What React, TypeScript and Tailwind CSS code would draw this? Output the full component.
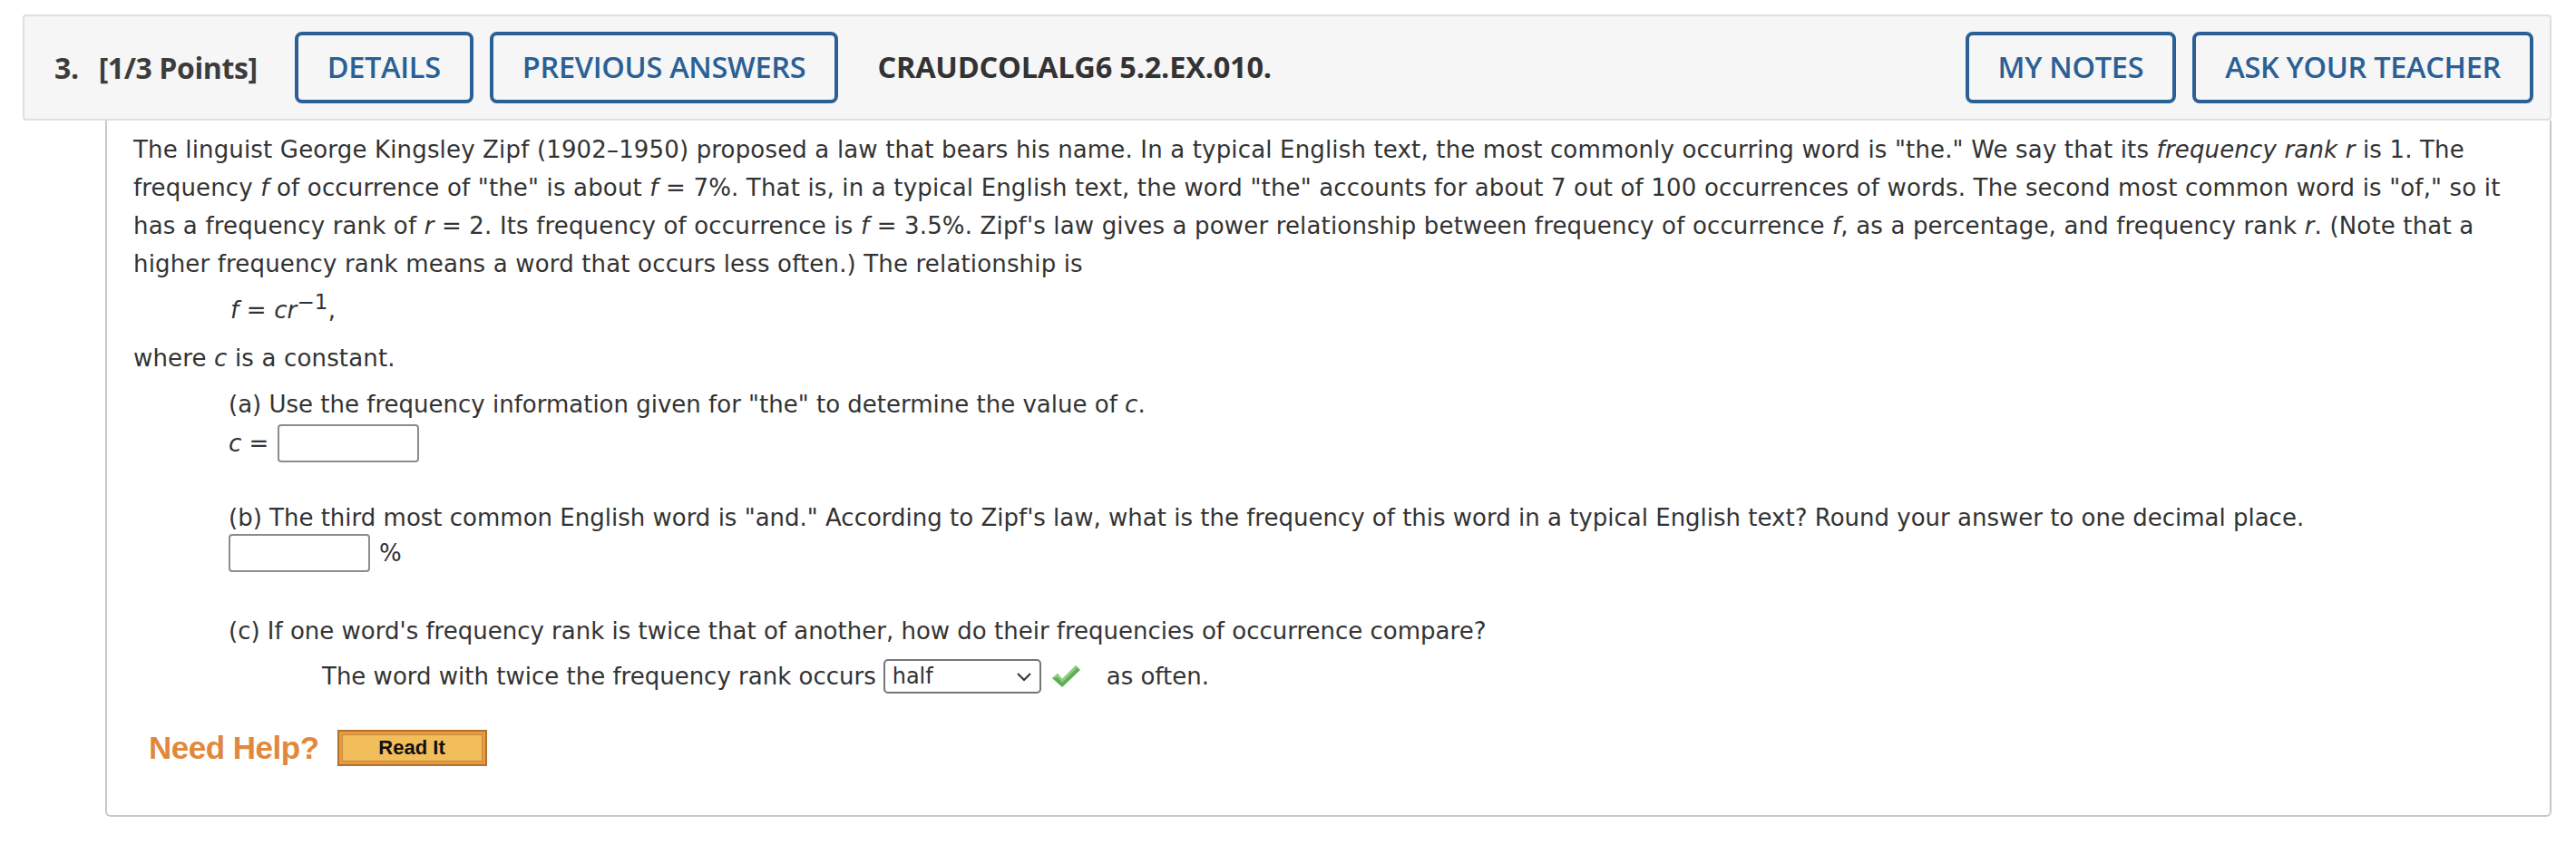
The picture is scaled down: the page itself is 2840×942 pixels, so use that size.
import React from 'react'

const btn =
	'h-[79px] px-[32px] flex items-center border-[4px] border-[#2a6095] rounded-[8px] text-[#2a6095] text-[32.5px] font-semibold tracking-[-0.3px]'

function CheckMark() {
	return (
		<svg width="34" height="30" viewBox="0 0 34 30" className="ml-[10px]">
			<path d="M2 17 L8 12 L13 18 L28 3 L33 8 L13 27 Z" fill="#5fae54" />
			<path d="M2 17 L8 12 L13 18 L28 3 L30 5 L13 22 L8 16 Z" fill="#8cd07e" />
		</svg>
	)
}

export default function App() {
	return (
		<div className="w-[2840px] h-[942px] bg-white pt-[16px] pl-[25px] font-['DejaVu_Sans',sans-serif] text-[#333]">
			<div className="w-[2788px]">
				{/* question header */}
				<div className="h-[117px] flex items-center bg-[#f6f6f6] border-2 border-[#dedede] rounded-[4px] pl-[33px] pr-[18px] font-['Open_Sans',sans-serif]">
					<div className="text-[32px] font-bold text-[#3c3c3c] flex gap-[22px] mr-[41px] tracking-[-0.4px]">
						<span>3.</span>
						<span>[1/3 Points]</span>
					</div>
					<div className="flex gap-[18px]">
						<button className={btn}>DETAILS</button>
						<button className={btn}>PREVIOUS ANSWERS</button>
					</div>
					<div className="ml-[43px] text-[32.5px] font-bold text-[#333] tracking-[-0.2px]">
						CRAUDCOLALG6 5.2.EX.010.
					</div>
					<div className="ml-auto flex gap-[18px]">
						<button className={btn}>MY NOTES</button>
						<button className={btn}>ASK YOUR TEACHER</button>
					</div>
				</div>

				{/* question body */}
				<div className="ml-[91px] h-[768px] border-x-2 border-b-2 border-[#c8c8c8] rounded-b-[6px] pl-[29px] pt-[11px] text-[26px] leading-[42px] tracking-[0.16px]">
					<p>
						The linguist George Kingsley Zipf (1902–1950) proposed a law that bears his name. In a typical English text, the most commonly occurring word is "the." We say that its <i>frequency rank r</i> is 1. The
						<br />
						frequency <i>f</i> of occurrence of "the" is about <i>f</i> = 7%. That is, in a typical English text, the word "the" accounts for about 7 out of 100 occurrences of words. The second most common word is "of," so it
						<br />
						has a frequency rank of <i>r</i> = 2. Its frequency of occurrence is <i>f</i> = 3.5%. Zipf's law gives a power relationship between frequency of occurrence <i>f</i>, as a percentage, and frequency rank <i>r</i>. (Note that a
						<br />
						higher frequency rank means a word that occurs less often.) The relationship is
					</p>
					<p className="ml-[107px] mt-[9px]">
						<i>f</i> = <i>cr</i>
						<sup className="text-[23px] relative top-[-10px]">−1</sup>,
					</p>
					<p className="mt-[11px]">
						where <i>c</i> is a constant.
					</p>

					<div className="ml-[105px] mt-[9px] tracking-normal">
						<p>
							(a) Use the frequency information given for "the" to determine the value of <i>c</i>.
						</p>
						<div className="flex items-center gap-[10px] h-[42px] mt-[1px]">
							<span>
								<i>c</i> =
							</span>
							<input
								type="text"
								className="w-[156px] h-[42px] border-2 border-[#8c8c8c] rounded-[4px] bg-white"
							/>
						</div>

						<p className="mt-[40px]">
							(b) The third most common English word is "and." According to Zipf's law, what is the frequency of this word in a typical English text? Round your answer to one decimal place.
						</p>
						<div className="flex items-center gap-[10px] h-[42px] mt-[-3px]">
							<input
								type="text"
								className="w-[156px] h-[42px] border-2 border-[#8c8c8c] rounded-[4px] bg-white"
							/>
							<span>%</span>
						</div>

						<p className="mt-[44px]">
							(c) If one word's frequency rank is twice that of another, how do their frequencies of occurrence compare?
						</p>
						<div className="ml-[103px] mt-[8px] flex items-center h-[42px]">
							<span>The word with twice the frequency rank occurs</span>
							<div className="ml-[8px] w-[174px] h-[38px] border-2 border-[#767676] rounded-[5px] flex items-center justify-between pl-[8px] pr-[8px] bg-white">
								<span className="text-[24px] leading-none">half</span>
								<svg width="18" height="12" viewBox="0 0 18 12">
									<path d="M2 3 L9 10 L16 3" fill="none" stroke="#333" strokeWidth="2" />
								</svg>
							</div>
							<CheckMark />
							<span className="ml-[28px]">as often.</span>
						</div>
					</div>

					<div className="flex items-center mt-[37px] ml-[17px]">
						<span className="font-['Liberation_Sans',sans-serif] font-bold text-[35px] text-[#e2883a] tracking-[-0.5px]">
							Need Help?
						</span>
						<div className="ml-[20px] w-[165px] h-[40px] bg-[#e9993f] border-2 border-[#b1722e] p-[3px]">
							<div className="w-full h-full bg-[#f2bd5b] border border-[#c48a3c] flex items-center justify-center font-['Liberation_Sans',sans-serif] font-bold text-[22px] text-[#111] leading-none tracking-normal">
								Read It
							</div>
						</div>
					</div>
				</div>
			</div>
		</div>
	)
}
